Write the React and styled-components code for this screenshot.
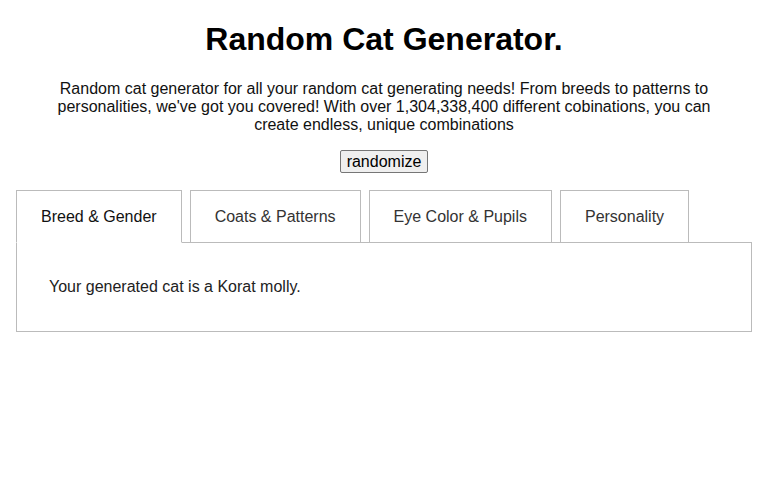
import React, { useState } from "react";
import styled, { createGlobalStyle } from "styled-components";

const Global = createGlobalStyle`
  html, body { margin: 0; padding: 0; background: #fff; }
  body { font-family: "Liberation Sans", Arial, sans-serif; color: #000; }
`;

const Page = styled.main`
  padding: 0 16px;
  text-align: center;
`;

const Title = styled.h1`
  font-size: 32px;
  font-weight: bold;
  margin: 21.44px 0;
  line-height: 37px;
`;

const Intro = styled.p`
  font-size: 16px;
  line-height: 18px;
  margin: 16px 40px;
  color: #111;
`;

const Randomize = styled.button`
  font-family: "Liberation Sans", Arial, sans-serif;
  font-size: 16px;
  line-height: 18px;
  padding: 2px 6px 1px;
  background: #efefef;
  border: 1px solid #767676;
  border-radius: 2px;
  color: #000;
  cursor: pointer;
`;

const Tabs = styled.section`
  margin-top: 17px;
  text-align: left;
`;

const TabList = styled.div`
  display: flex;
  gap: 8px;
  position: relative;
  z-index: 1;
`;

const Tab = styled.button`
  font-family: "Liberation Sans", Arial, sans-serif;
  font-size: 16px;
  line-height: 18px;
  padding: 17px 24px 16px;
  background: #fff;
  border: 1px solid #bbb;
  border-bottom: ${(p) => (p.$active ? "1px solid #fff" : "1px solid #bbb")};
  color: ${(p) => (p.$active ? "#111" : "#333")};
  margin-bottom: -1px;
  cursor: pointer;
`;

const Panel = styled.div`
  border: 1px solid #bbb;
  padding: 19px 32px 19px;
  font-size: 16px;
  line-height: 18px;
  color: #222;
`;

const PanelText = styled.p`
  margin: 16px 0;
`;

const tabs = [
  "Breed & Gender",
  "Coats & Patterns",
  "Eye Color & Pupils",
  "Personality",
];

export default function App() {
  const [active, setActive] = useState(0);
  return (
    <Page>
      <Global />
      <Title>Random Cat Generator.</Title>
      <Intro>
        Random cat generator for all your random cat generating needs! From
        breeds to patterns to personalities, we've got you covered! With over
        1,304,338,400 different cobinations, you can create endless, unique
        combinations
      </Intro>
      <Randomize>randomize</Randomize>
      <Tabs>
        <TabList>
          {tabs.map((t, i) => (
            <Tab key={t} $active={i === active} onClick={() => setActive(i)}>
              {t}
            </Tab>
          ))}
        </TabList>
        <Panel>
          <PanelText>Your generated cat is a Korat molly.</PanelText>
        </Panel>
      </Tabs>
    </Page>
  );
}
